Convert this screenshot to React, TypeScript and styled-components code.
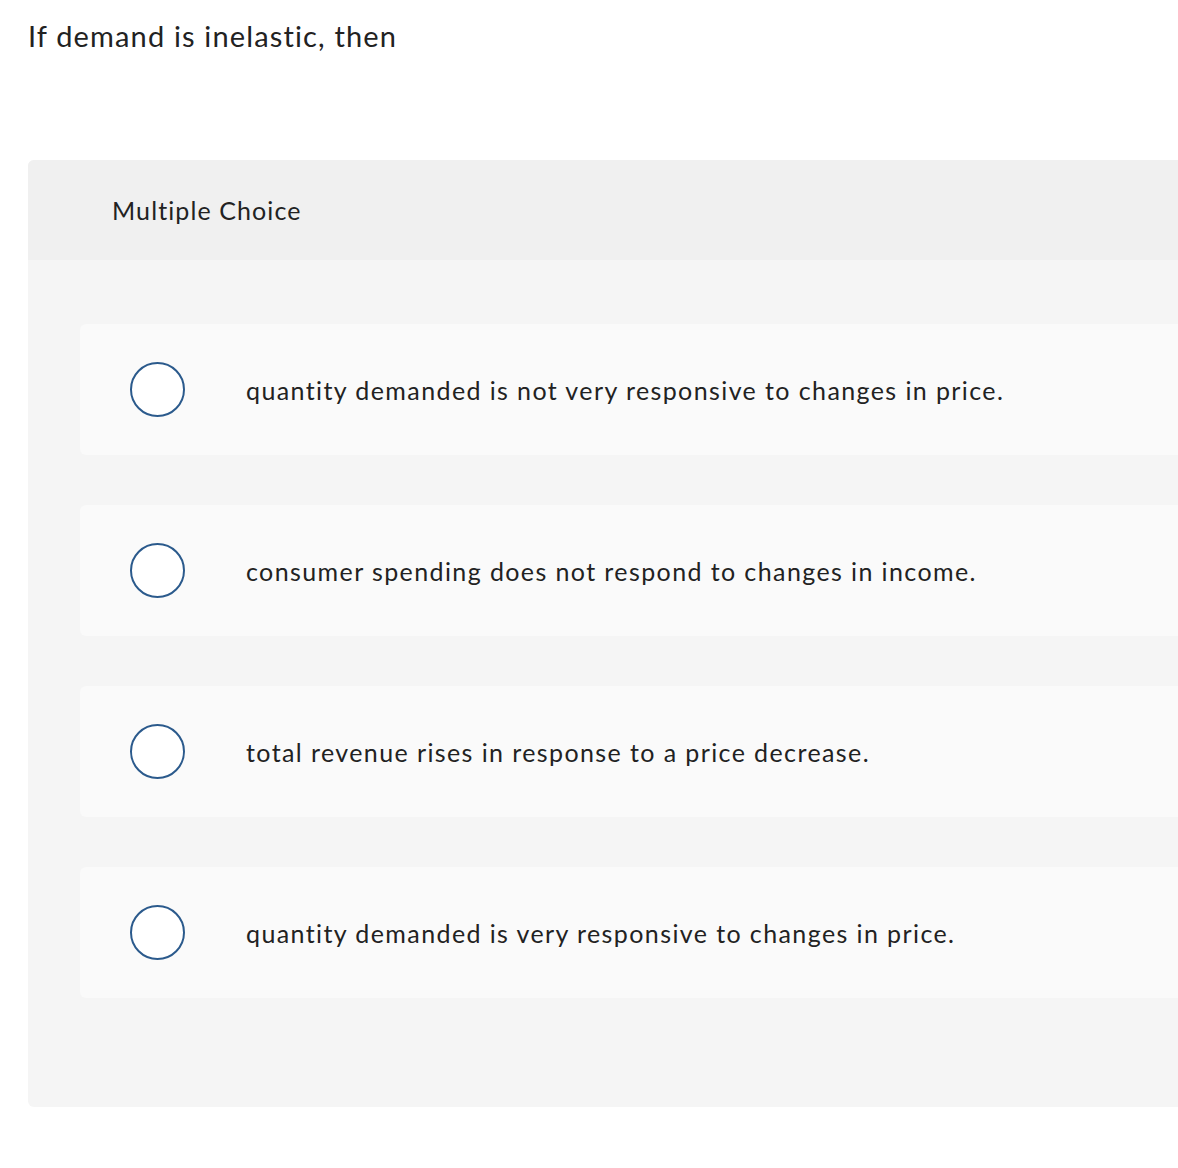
import React from "react";
import styled, { createGlobalStyle } from "styled-components";

const Global = createGlobalStyle`
  html, body { margin: 0; padding: 0; background: #ffffff; }
  body { font-family: Lato, "Liberation Sans", sans-serif; color: #222; }
`;

const Page = styled.div`
  padding: 16px 0 0 28px;
`;

const Question = styled.p`
  margin: 0;
  font-size: 29px;
  line-height: 40px;
  letter-spacing: 1.15px;
  color: #222;
`;

const Panel = styled.div`
  margin-top: 104px;
  background: #f5f5f5;
  border-radius: 6px 0 0 6px;
  padding-bottom: 109px;
`;

const Header = styled.div`
  height: 100px;
  background: #f0f0f0;
  border-radius: 6px 0 0 0;
  display: flex;
  align-items: center;
  padding-left: 84px;
  font-size: 25px;
  letter-spacing: 1.1px;
  color: #222;
`;

const Options = styled.div`
  display: flex;
  flex-direction: column;
  gap: 50px;
  padding: 64px 0 0 52px;
`;

const Option = styled.label`
  display: flex;
  align-items: center;
  height: 131px;
  background: #fafafa;
  border-radius: 6px 0 0 6px;
  padding-left: 50px;
  cursor: pointer;
`;

const Radio = styled.span`
  width: 51px;
  height: 51px;
  border-radius: 50%;
  border: 2px solid #2b5a8c;
  background: #ffffff;
  flex: none;
`;

const OptionText = styled.span`
  margin-left: 61px;
  font-size: 25px;
  letter-spacing: 1.4px;
  color: #222;
`;

const choices = [
  "quantity demanded is not very responsive to changes in price.",
  "consumer spending does not respond to changes in income.",
  "total revenue rises in response to a price decrease.",
  "quantity demanded is very responsive to changes in price.",
];

export default function App() {
  return (
    <>
      <Global />
      <Page>
        <Question>If demand is inelastic, then</Question>
        <Panel>
          <Header>Multiple Choice</Header>
          <Options>
            {choices.map((c) => (
              <Option key={c}>
                <Radio />
                <OptionText>{c}</OptionText>
              </Option>
            ))}
          </Options>
        </Panel>
      </Page>
    </>
  );
}
